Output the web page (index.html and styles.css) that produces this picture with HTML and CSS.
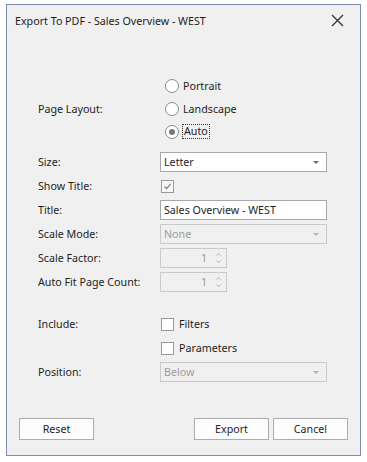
FILE: index.html
```html
<!DOCTYPE html>
<html>
<head>
<meta charset="utf-8">
<link rel="stylesheet" href="styles.css">
</head>
<body>
<div class="dialog">
  <div class="titlebar">
    <span class="title">Export To PDF - Sales Overview - WEST</span>
    <svg class="close" width="13" height="13" viewBox="0 0 13 13"><path d="M1 1L12 12M12 1L1 12" stroke="#333" stroke-width="1.3" fill="none"/></svg>
  </div>
  <div class="form">
    <div class="layout-block">
      <div class="label layout-label">Page Layout:</div>
      <div class="radios">
        <div class="radio-row"><span class="radio"></span><span>Portrait</span></div>
        <div class="radio-row"><span class="radio"></span><span>Landscape</span></div>
        <div class="radio-row"><span class="radio checked"></span><span class="focus">Auto</span></div>
      </div>
    </div>
    <div class="rows">
      <div class="row">
        <div class="label">Size:</div>
        <div class="combo"><span>Letter</span><span class="arrow"></span></div>
      </div>
      <div class="row">
        <div class="label">Show Title:</div>
        <div class="check-wrap"><span class="check checked"><svg width="11" height="11" viewBox="0 0 11 11"><path d="M2.5 5.5L4.6 7.6L8.6 2.8" stroke="#777" stroke-width="1.1" fill="none"/></svg></span></div>
      </div>
      <div class="row">
        <div class="label">Title:</div>
        <div class="textbox">Sales Overview - WEST</div>
      </div>
      <div class="row">
        <div class="label">Scale Mode:</div>
        <div class="combo disabled"><span>None</span><span class="arrow"></span></div>
      </div>
      <div class="row">
        <div class="label">Scale Factor:</div>
        <div class="spin"><span class="spin-val">1</span><span class="spin-btns"><svg width="5" height="3" viewBox="0 0 5 3"><path d="M0.5 2.5L2.5 0.5L4.5 2.5" stroke="#b0b0b0" fill="none"/></svg><svg width="5" height="3" viewBox="0 0 5 3"><path d="M0.5 0.5L2.5 2.5L4.5 0.5" stroke="#b0b0b0" fill="none"/></svg></span></div>
      </div>
      <div class="row">
        <div class="label">Auto Fit Page Count:</div>
        <div class="spin"><span class="spin-val">1</span><span class="spin-btns"><svg width="5" height="3" viewBox="0 0 5 3"><path d="M0.5 2.5L2.5 0.5L4.5 2.5" stroke="#b0b0b0" fill="none"/></svg><svg width="5" height="3" viewBox="0 0 5 3"><path d="M0.5 0.5L2.5 2.5L4.5 0.5" stroke="#b0b0b0" fill="none"/></svg></span></div>
      </div>
    </div>
    <div class="rows second">
      <div class="row">
        <div class="label">Include:</div>
        <div class="check-wrap"><span class="check"></span><span>Filters</span></div>
      </div>
      <div class="row">
        <div class="label"></div>
        <div class="check-wrap"><span class="check"></span><span>Parameters</span></div>
      </div>
      <div class="row">
        <div class="label">Position:</div>
        <div class="combo disabled"><span>Below</span><span class="arrow"></span></div>
      </div>
    </div>
  </div>
  <div class="buttons">
    <button class="btn">Reset</button>
    <div class="right-btns">
      <button class="btn">Export</button>
      <button class="btn">Cancel</button>
    </div>
  </div>
</div>
</body>
</html>
```
FILE: styles.css
```css
html, body { margin: 0; padding: 0; background: #ffffff; }
body { font-family: "Noto Sans", "Open Sans", sans-serif; font-size: 10.7px; color: #1e1e1e; }
.dialog {
  margin: 4px 0 0 6px;
  width: 355px;
  height: 452px;
  box-sizing: border-box;
  border: 1px solid #7f8dac;
  background: #f0f0f0;
  display: flex;
  flex-direction: column;
}
.titlebar {
  height: 31px;
  display: flex;
  align-items: center;
  justify-content: space-between;
  padding: 0 16px 0 8px;
}
.title { line-height: 16px; }
.close { display: block; }
.form { padding-left: 31px; padding-top: 38px; }
.layout-block { display: grid; grid-template-columns: 122px 1fr; }
.layout-label { align-self: center; }
.radios { display: flex; flex-direction: column; }
.radio-row { height: 23px; display: flex; align-items: center; gap: 4px; padding-left: 5px; }
.radio {
  width: 12px; height: 12px; border: 1px solid #8a8a8a; border-radius: 50%;
  background: #fff; display: flex; align-items: center; justify-content: center;
}
.radio.checked::after { content: ""; width: 6px; height: 6px; border-radius: 50%; background: #7a7a7a; }
.focus { outline: 1px dotted #333; outline-offset: 0; line-height: 13px; padding: 0 1px; }
.rows { display: flex; flex-direction: column; gap: 4px; margin-top: 9px; }
.rows.second { margin-top: 22px; }
.row { display: grid; grid-template-columns: 122px 1fr; height: 20px; align-items: center; }
.label { line-height: 16px; }
.combo, .textbox {
  width: 167px; height: 20px; box-sizing: border-box;
  border: 1px solid #a8a8a8; background: #fff;
  display: flex; align-items: center; justify-content: space-between;
  padding: 0 7px 0 3px;
}
.combo.disabled { background: #f0f0f0; border-color: #cacaca; color: #9c9c9c; }
.arrow { width: 0; height: 0; border-left: 3px solid transparent; border-right: 3px solid transparent; border-top: 3px solid #6a6a6a; }
.combo.disabled .arrow { border-top-color: #b4b4b4; }
.check-wrap { display: flex; align-items: center; gap: 5px; padding-left: 1px; }
.check {
  width: 13px; height: 13px; box-sizing: border-box; border: 1px solid #9a9a9a; background: #fff;
  display: flex; align-items: center; justify-content: center;
}
.check.checked { background: #f7f7f7; }
.spin {
  width: 67px; height: 20px; box-sizing: border-box; border: 1px solid #cacaca; background: #f0f0f0; color: #9c9c9c;
  display: flex; align-items: center; justify-content: flex-end; padding-right: 5px; gap: 9px;
}
.spin-btns { display: flex; flex-direction: column; gap: 4px; }
.spin-btns svg { display: block; }
.buttons {
  margin-top: auto; margin-bottom: 15px;
  display: flex; justify-content: space-between; padding: 0 12px 0 12px;
}
.right-btns { display: flex; gap: 4px; }
.btn {
  width: 75px; height: 22px; box-sizing: border-box; border: 1px solid #adadad; background: #fdfdfd;
  font-family: inherit; font-size: 10.7px; color: #1e1e1e; padding: 0;
}
```
